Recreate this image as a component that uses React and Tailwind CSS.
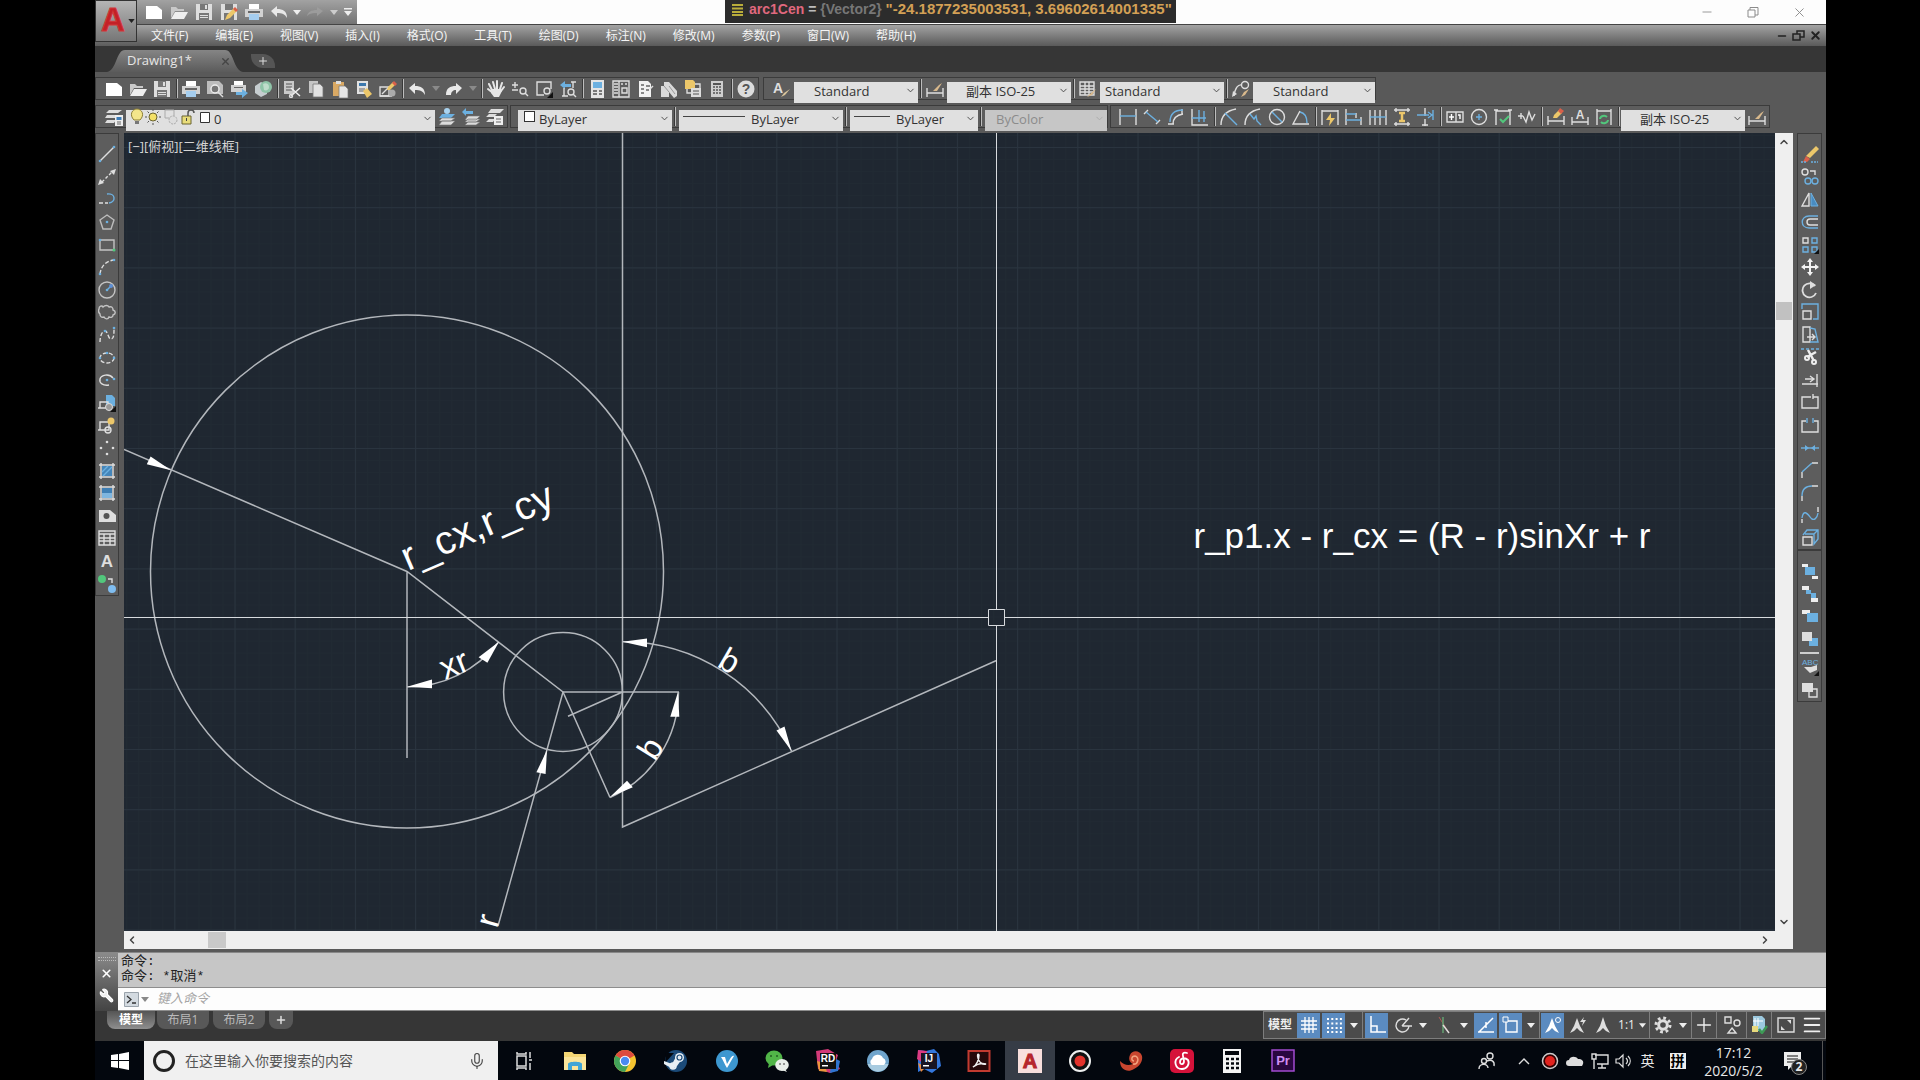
import { Fragment } from 'react';
import { ChevronDown, ChevronUp, ChevronLeft, ChevronRight, Minus, X, Plus, Mic, Wrench, Menu } from 'lucide-react';

const W = '#dedede';
const B = '#6cb0e0';
const Y = '#ecc76a';
const G = '#52c77c';
const R = '#d9604a';

const stroke = { fill: 'none', stroke: W, strokeWidth: 1.4 };
const blue = { fill: 'none', stroke: B, strokeWidth: 1.4 };

// 18x18 glyphs of the toolbars
const icons = {
  new: <path d="M1 3h11l5 4v9H1z" fill="#fff" />,
  open: <><path d="M1 15V4h5l2 2h6v2H5z" fill="#c9c9c9" /><path d="M5 9h13l-4 7H1z" fill="#eee" /></>,
  save: <><path d="M1 1h16v16H1z" fill={W} /><path d="M5 1h8v6H5zM4 10h10v7H4z" fill="#777" /><path d="M10 2h2v4h-2zM5 12h8v1H5zM5 14h8v1H5z" fill={W} /></>,
  saveAs: <><path d="M1 1h16v16H1z" fill={W} /><path d="M5 1h8v6H5zM4 10h10v7H4z" fill="#777" /><path d="M5 17l2-5 7-7 3 3-7 7z" fill={Y} /><path d="M13 6l2-2 3 3-2 2z" fill={R} /></>,
  print: <><path d="M4 1h10v5H4z" fill="#fff" /><path d="M0 6h18v8H0z" fill="#d2d2d2" /><path d="M3 8h12v2H3z" fill="#666" /><path d="M4 11h10v6H4z" fill="#a5cdee" /></>,
  preview: <><path d="M1 1h12l4 4v9H1z" fill="#bdbdbd" /><circle cx="9" cy="9" r="4" fill="#777" stroke="#eee" strokeWidth="1.4" /><path d="M12 12l5 5" {...stroke} /></>,
  publish: <><path d="M4 1h9v4H4z" fill="#fff" /><path d="M1 5h15v7H1z" fill="#d2d2d2" /><path d="M4 7h9v1H4z" fill="#666" /><path d="M6 12h6V9l6 4-6 5v-3H6z" fill={B} /></>,
  globe: <><path d="M1 6l6-4 6 3v9l-6 3-6-4z" fill="#c6cdd0" /><circle cx="12" cy="7" r="6" fill="#8fc4a8" /><path d="M9 4c3-2 6 0 6 3s-3 4-5 3z" fill="#bfdccb" /></>,
  cut: <><path d="M1 1h10v13H1z" fill="#c9c9c9" /><path d="M3 4h6M3 7h6M3 10h6" stroke="#555" /><path d="M8 8l9 8M17 8l-9 8" stroke="#eee" strokeWidth="1.5" /><circle cx="8" cy="16" r="1.5" {...stroke} /></>,
  copy: <><path d="M2 1h9v12H2z" fill="#c5c5c5" /><path d="M6 4h7l3 3v10H6z" fill="#e2e2e2" stroke="#777" strokeWidth=".8" /></>,
  paste: <><path d="M2 2h11v14H2z" fill="#d9a964" /><path d="M5 1h5v3H5z" fill="#ddd" /><path d="M8 6h6l3 3v9H8z" fill="#e6e6e6" stroke="#777" strokeWidth=".7" /></>,
  match: <><path d="M2 1h11v13H2z" fill="#e2e2e2" /><path d="M4 3h7v3H4z" fill="#3c78ad" /><path d="M4 9h6M4 11h6" stroke="#666" /><path d="M8 11l4-3 5 6-5 4z" fill={Y} /></>,
  block: <><path d="M1 7h9v9H1z" {...stroke} /><path d="M1 16h12M10 7L3 14" {...stroke} /><circle cx="13" cy="13" r="3.5" fill="#aaa" /><path d="M8 10l1-3 5-5 3 2-6 6z" fill={Y} /><path d="M13 3l2-2 3 3-2 2z" fill={R} /></>,
  undo: <path d="M1 8l6-5v3c6 0 10 2 10 9-2-4-5-5-10-5v4z" fill="#e8e8e8" />,
  redo: <path d="M17 8l-6-5v3C5 6 1 8 1 15h5c0-3 2-5 5-5v4z" fill="#e8e8e8" />,
  redoDim: <path d="M17 8l-6-4v3C5 7 2 9 1 13c3-3 6-3 10-3v3z" fill="#9c9c9c" />,
  pan: <><path d="M5 10L2 4M8 9L6 2M10 9V1M13 9l2-6M6 13L1 9M14 11l3-4" fill="none" stroke="#e6e6e6" strokeWidth="2" strokeLinecap="round" /><path d="M4 9h10l1 2-3 6H7l-3-4z" fill="#e6e6e6" /></>,
  zoom: <><path d="M1 5h6M4 2v6M1 10h6" {...stroke} /><circle cx="12" cy="11" r="3" {...stroke} /><path d="M14 13l3 3" {...stroke} /></>,
  zoomWin: <><path d="M16 9V2H2v13h7" {...stroke} /><circle cx="12" cy="11" r="3" {...stroke} /><path d="M18 12v6h-6z" fill="#111" /></>,
  zoomPrev: <><path d="M1 5l5-4v3h6v3H6v2z" fill={B} /><path d="M14 2v6M5 8v8h4M3 16h5M12 2h5" {...stroke} /><circle cx="12" cy="12" r="3" {...stroke} /><path d="M14 14l3 3" {...stroke} /></>,
  props: <><path d="M3 0h13v18H3z" fill="#e4e4e4" /><path d="M5 2h9v6H5z" fill={B} /><path d="M5 11h4M5 14h4M11 11h3M11 14h3" stroke="#555" strokeWidth="1.4" /></>,
  center: <><path d="M1 1h16v16H1z" {...stroke} /><path d="M7 1v16M2 4h4M2 7h4M2 10h4M2 13h4M9 4h2M13 4h2M10 8h5v5h-5z" {...stroke} /></>,
  palette: <><path d="M3 1h9l3 3v13H3z" fill="#f1f1f1" /><path d="M5 5h3M5 9h3M5 13h3M10 6h4M10 10h3" stroke="#666" strokeWidth="1.6" /><path d="M14 9l3-3" {...stroke} /></>,
  sheet: <><path d="M1 6h3V2h5l8 9v5l-3 2-5-6v5H1z" fill="#dadada" /><path d="M4 6l5 6M9 6l6 8" stroke="#888" strokeWidth=".8" /></>,
  markup: <><path d="M1 0h8l2 2v7H1z" fill={Y} /><path d="M7 8h10v9H7z" fill="#ddd" /><path d="M9 11h6M9 14h6" stroke="#555" /><path d="M11 4h5v4M3 9v4h4" {...stroke} /></>,
  calc: <><path d="M3 1h12v16H3z" fill="#cfcfcf" /><path d="M5 3h8v2H5z" fill="#555" /><path d="M5 7h8M5 10h8M5 13h8" stroke="#555" strokeWidth="1.6" strokeDasharray="2 1" /></>,
  help: <><circle cx="9" cy="9" r="8.5" fill="#dcdcdc" /><text x="9" y="14" textAnchor="middle" fontSize="14" fontWeight="700" fill="#555" fontFamily="Liberation Sans">?</text></>,
  textStyle: <><text x="0" y="13" fontSize="14" fontWeight="700" fill={W} fontFamily="Liberation Sans">A</text><path d="M8 17l3-4 6-4-5 6z" fill="#d9c59c" /></>,
  dimStyle: <><path d="M1 8v9M17 8v9M1 13h16" {...stroke} /><path d="M7 11l6-6 3-2-5 8z" fill="#d9b98c" /></>,
  tableStyle: <><path d="M1 2h14v13H1zM1 6h14M1 9h14M1 12h14M6 2v13M10 2v13" {...stroke} /><path d="M8 17l4-4 5-4-4 6z" fill="#d9b98c" /></>,
  leader: <><path d="M2 16C3 8 6 4 10 5" {...stroke} /><circle cx="13" cy="5" r="3.5" {...stroke} /><path d="M0 17l1-6 4 3z" fill={W} /><path d="M9 17l3-5 5-3-4 6z" fill="#d9b98c" /></>,
  layers: <><path d="M4 2h13l-4 3H1zM2 7h11l-3 3H0zM2 12h9l-2 3H0z" fill={W} /><path d="M10 7h8v11h-8z" fill="#eee" /><path d="M11.500 9h5v3h-5z" fill="#3d7db8" /><path d="M12 14h4M12 16h4" stroke="#666" /></>,
  layerCur: <><path d="M4 6h13l-4 4H1z" fill={B} /><path d="M4 10h13l-4 3H1zM4 13h13l-4 4H1z" fill="#dcdcdc" stroke="#777" strokeWidth=".6" /><circle cx="9" cy="3" r="3" fill="#a9d3f0" /></>,
  layerPrev: <><path d="M0 4l4-4v3h7v3H4v2z" fill={B} /><path d="M6 8h12l-4 4H3zM6 11h12l-4 3H3zM6 14h12l-4 3H3z" fill="#dcdcdc" stroke="#777" strokeWidth=".6" /></>,
  layerState: <><path d="M5 1h13l-4 4H2zM3 6h8l-3 3H0zM3 11h6l-2 3H0z" fill={W} /><path d="M8 8h9v9H8z" fill="#eee" /><path d="M10 11h5M10 14h5" stroke="#666" /></>,
  dimLin: <><path d="M1 1v16M17 1v16" {...stroke} /><path d="M1 8h16" {...blue} /></>,
  dimAlign: <><path d="M1 6l4-4M13 16l4-4" {...stroke} /><path d="M3 4l12 10" {...blue} /></>,
  dimArc: <><path d="M1 16h6M15 1v6M6 16c0-6 4-9 10-10" {...stroke} /><path d="M3 14C3 6 8 2 16 2" {...blue} /></>,
  dimOrd: <><path d="M1 1v16h16" {...stroke} /><path d="M1 10h14M8 2v12M13 3v11" {...blue} /></>,
  dimRad: <><path d="M1 17C1 9 5 3 16 1" {...stroke} /><path d="M5 5l12 12" {...blue} /></>,
  dimJog: <><path d="M1 17C1 9 5 3 16 1" {...stroke} /><path d="M6 6l4 5 2-3 1 5 4 4" {...blue} /></>,
  dimDia: <><circle cx="9" cy="9" r="7.500" {...stroke} /><path d="M4 4l10 10" {...blue} /></>,
  dimAng: <><path d="M8 3L1 16h16" {...stroke} /><path d="M8 4c5 1 7 6 7 11" {...blue} /></>,
  dimQuick: <><path d="M1 2v15M17 2v15M1 3h16" {...stroke} /><path d="M10 5l-5 7h4l-1 6 6-8h-4z" fill={Y} /></>,
  dimBase: <><path d="M1 1v16M11 5v5M16 9v8" {...stroke} /><path d="M1 6h10M1 12h15" {...blue} /></>,
  dimCont: <><path d="M1 2v15M6 2v15M11 2v15M17 2v15" {...stroke} /><path d="M1 9h16" {...blue} /></>,
  dimSpace: <><path d="M1 2h16M1 16h16M3 0v4M15 0v4M3 14v4M15 14v4" {...stroke} /><path d="M6 5h6M6 13h6M9 5v8" stroke={Y} strokeWidth="2.500" /></>,
  dimBreak: <><path d="M8 0v8M8 11v7M5 17h6" {...stroke} /><path d="M0 7h12M16 2v10M11 4l4 3-4 3" {...blue} /></>,
  tol: <><path d="M1 4h16v10H1zM10 4v10" {...stroke} /><path d="M3 9h5M5.500 6v6M12 7h2v4" stroke="#fff" strokeWidth="1.400" fill="none" /></>,
  cmark: <><circle cx="9" cy="9" r="7.500" {...stroke} /><path d="M6 9h6M9 6v6" {...blue} /></>,
  inspect: <><path d="M2 2v15M16 2v15M2 3h14M0 2h4M14 2h4" {...stroke} /><path d="M6 11l3 3 6-6" fill="none" stroke={G} strokeWidth="2" /></>,
  jogLine: <path d="M0 8h5M3 5v6M5 8l3 6 3-10 3 8 3-6" {...stroke} />,
  dimEdit: <><path d="M1 8v9M17 8v9M1 13h16" {...stroke} /><path d="M6 10l1-3 5-5 3 3-5 5z" fill={Y} /><path d="M11 3l2-3 4 3-3 3z" fill={R} /></>,
  dimText: <><path d="M1 9v8M17 9v8M1 14h16" {...stroke} /><text x="9" y="11" textAnchor="middle" fontSize="12" fontWeight="700" fill={W} fontFamily="Liberation Sans">A</text></>,
  dimUpd: <><path d="M2 1v16M16 1v16M2 3h14" {...stroke} /><path d="M5 11a4 3.500 0 0 1 7-2M13 12a4 3.500 0 0 1-7 2" fill="none" stroke={G} strokeWidth="2" /></>,

  line: <><path d="M2 16L16 2" {...stroke} /><circle cx="2" cy="16" r="1.300" fill={B} /><circle cx="16" cy="2" r="1.300" fill={B} /></>,
  xline: <><path d="M4 14L14 4" {...stroke} strokeDasharray="3 2" /><path d="M0 17l2-6 4 4zM18 1l-6 2 4 4z" fill={W} /></>,
  pline: <><path d="M1 13h9" {...stroke} strokeDasharray="4 2" /><path d="M9 4c9-1 9 8 2 9" {...blue} /></>,
  polygon: <><path d="M9 2l7 5-3 9H5L2 7z" fill="none" stroke="#bcbcbc" strokeWidth="1.400" /><circle cx="9" cy="9" r="1.300" fill={B} /></>,
  rect: <><path d="M2 4h14v10H2z" fill="none" stroke="#c4c4c4" strokeWidth="1.400" /><circle cx="2" cy="4" r="1.300" fill={B} /><circle cx="16" cy="14" r="1.500" fill={G} /></>,
  arc: <><path d="M2 16C3 8 8 3 16 2" {...stroke} strokeDasharray="4 2" /><circle cx="2" cy="16" r="1.300" fill={B} /><circle cx="16" cy="2" r="1.300" fill={B} /></>,
  circle: <><circle cx="9" cy="9" r="8" fill="none" stroke="#c4c4c4" strokeWidth="1.400" /><path d="M9 9l4-4" {...blue} /><circle cx="13" cy="5" r="2" fill="#5d8fd6" /><circle cx="9" cy="9" r="1.300" fill={B} /></>,
  cloud: <path d="M1 6c0-3 3-4 4-2 2-2 5-2 6 0 3-1 4 1 4 3 3 1 3 4 0 5 0 2-2 3-4 2-1 3-4 2-5 0-3 1-4-1-4-3-1-1-2-3-1-5z" fill="none" stroke="#c4c4c4" strokeWidth="1.400" />,
  spline: <><path d="M2 16c0-6 2-11 5-11s3 8 6 8 3-5 3-11" {...stroke} strokeDasharray="4 2" /><circle cx="7" cy="5" r="1.300" fill={B} /><circle cx="16" cy="2" r="1.300" fill={B} /></>,
  ellipse: <><ellipse cx="9" cy="9" rx="7" ry="5" {...stroke} strokeDasharray="4 2" /><circle cx="9" cy="4" r="1.300" fill={B} /><circle cx="2" cy="9" r="1.300" fill={B} /><circle cx="16" cy="9" r="1.300" fill={B} /></>,
  ellArc: <><path d="M11 14C5 15 1 12 2 8s9-6 13-1" {...stroke} /><circle cx="9" cy="9" r="1.300" fill={B} /><circle cx="16" cy="8" r="1.300" fill={B} /></>,
  insert: <><path d="M8 1h6l3 3v8H8z" fill={B} /><path d="M2 8h8v6H2zM0 14h4" {...stroke} /><circle cx="11" cy="13" r="3.500" fill="#999" stroke={W} /><path d="M18 12v6h-6z" fill="#111" /></>,
  mkBlock: <><path d="M2 6h9v8H2zM0 14h5" {...stroke} /><circle cx="10" cy="14" r="3" {...stroke} /><circle cx="13" cy="5" r="3.500" fill={Y} /></>,
  point: <g fill={W}><circle cx="9" cy="3" r="1.300" /><circle cx="3" cy="9" r="1.300" /><circle cx="15" cy="9" r="1.300" /><circle cx="9" cy="15" r="1.300" /></g>,
  hatch: <><path d="M4 4h10v10H4z" fill="#4586ba" /><path d="M1 3h16M1 15h16M3 1v16M15 1v16" {...stroke} /><path d="M4 10l6-6M5 14l9-9" {...blue} /></>,
  gradient: <><path d="M4 4h10v10H4z" fill="#3f7fb4" /><path d="M4 9h10v5H4z" fill="#7fb6df" /><path d="M1 3h16M1 15h16M3 1v16M15 1v16" {...stroke} /></>,
  region: <><path d="M1 3h11l6 5v7H1z" fill={W} /><circle cx="8.500" cy="9" r="3" fill="#555" /></>,
  table: <path d="M1 2h16v14H1zM1 5h16M1 9h16M1 12h16M6 5v11M12 5v11" {...stroke} />,
  mtext: <text x="9" y="15" textAnchor="middle" fontSize="17" fontWeight="700" fill={W} fontFamily="Liberation Sans">A</text>,
  addSel: <><circle cx="4" cy="4" r="4" fill={G} /><circle cx="14" cy="14" r="4" fill="#7fbdf0" /><path d="M10 4h4v4" {...stroke} /></>,

  erase: <><path d="M5 11L15 1l3 3-9 9z" fill={Y} /><path d="M5 11l4 3-3 3H2z" fill={R} /><path d="M0 17h6M10 17h7" {...blue} strokeDasharray="2 1" /></>,
  copyObj: <><circle cx="4" cy="4" r="3" {...stroke} /><path d="M9 3h5v4" {...stroke} /><circle cx="7" cy="13" r="3" {...blue} /><circle cx="14" cy="13" r="3" {...blue} /></>,
  mirror: <><path d="M8 3v13H1z" {...stroke} /><path d="M10 3v13h7z" fill="#4a8cc0" stroke={B} /></>,
  offset: <><path d="M17 3H8C-1 3-1 15 8 15h9" {...blue} /><path d="M17 6H9c-4 0-4 6 0 6h8" {...stroke} /></>,
  array: <><path d="M2 2h5v5H2z" {...stroke} /><path d="M11 2h5v5h-5zM2 11h5v5H2zM11 11h5v5h-5z" {...blue} /><path d="M18 13v5h-5z" fill="#111" /></>,
  move: <path d="M9 0l3 4h-2v4h4V6l4 3-4 3v-2h-4v4h2l-3 4-3-4h2v-4H4v2L0 9l4-3v2h4V4H6z" fill="#f2f2f2" />,
  rotate: <><path d="M14 5a7 7 0 1 0 1 7" {...stroke} strokeWidth="1.800" /><path d="M9 0l6 4-6 4z" fill={W} /></>,
  scale: <><path d="M2 8h8v8H2z" {...stroke} /><path d="M1 6V1h16v15h-5" {...blue} /></>,
  stretch: <><path d="M2 1h7v15H2z" {...stroke} /><path d="M9 2l5 1 3 13H9" {...blue} /><path d="M6 11h7M11 8l3 3-3 3" {...stroke} /></>,
  trim: <><path d="M0 1h18" {...blue} strokeDasharray="3 2" /><path d="M7 2l6 11M15 4L6 9" stroke="#eee" strokeWidth="2.500" /><circle cx="13" cy="14" r="2" fill="none" stroke="#eee" strokeWidth="2" /><circle cx="6" cy="10" r="2" fill="none" stroke="#eee" strokeWidth="2" /></>,
  extend: <><path d="M1 13h16M16 3v13" {...stroke} /><path d="M4 8h8M9 5l4 3-4 3" {...stroke} /></>,
  breakPt: <path d="M12 4h5v11H1V4h9M12 1v5" {...stroke} />,
  breakObj: <><path d="M5 5H1v11h16V5h-4" {...stroke} /><path d="M6 2v5M12 2v5" {...blue} /></>,
  join: <><path d="M0 9h18" {...blue} /><path d="M4 6l4 3-4 3zM14 6l-4 3 4 3z" fill={B} /></>,
  chamfer: <><path d="M1 17v-6M11 2h6" {...stroke} /><path d="M1 11L11 2" {...blue} /></>,
  fillet: <><path d="M1 17v-5M11 2h6" {...stroke} /><path d="M1 12C1 5 5 2 11 2" {...blue} /></>,
  blend: <><path d="M1 17v-4M17 1v5" {...stroke} /><path d="M1 12C3 0 9 12 11 13s5 0 6-6" {...blue} /></>,
  explode: <><path d="M2 8h9v8H2z" {...stroke} /><path d="M2 6l4-5h11v9l-4 5V5H4M13 5l4-4" {...blue} /></>,
  front: <><path d="M1 2h6v3H1zM11 14h6v3h-6z" fill="#eee" /><path d="M4 5h10v8H4z" fill={B} /></>,
  back: <><path d="M1 1h7v4H1zM10 13h7v4h-7z" fill="#eee" /><path d="M5 5h5v3h5v5h-5V9H5z" fill={B} /></>,
  above: <><path d="M1 3h8v4H1z" fill="#eee" /><path d="M6 6h11v9H6z" fill={B} /></>,
  under: <><path d="M8 8h9v8H8z" fill={B} /><path d="M1 2h10v9H1z" fill={W} /></>,
  textFront: <><text x="1" y="7" fontSize="8" fill={B} fontFamily="Liberation Sans">ABC</text><path d="M3 9h7l6-2v5l-7 3z" fill={W} /><path d="M18 13v5h-5z" fill="#111" /></>,
  hatchBack: <><path d="M8 8h8v8H8z" {...stroke} /><path d="M1 2h11v9H1z" fill={W} /></>,
};

function Icon({ name, className = 'size-[18px]' }) {
  return <svg viewBox="0 0 18 18" className={`shrink-0 ${className}`} aria-hidden="true">{icons[name]}</svg>;
}

function ToolButton({ name, className = 'w-6' }) {
  return (
    <button type="button" aria-label={name} className={`flex h-[21px] shrink-0 items-center justify-center ${className}`}>
      <Icon name={name} />
    </button>
  );
}

function Sep() {
  return (
    <div className="flex w-[5px] shrink-0 justify-center self-stretch py-px">
      <div className="w-0.5 border-l border-[#383838] bg-[#bdbdbd]" />
    </div>
  );
}

function Caret({ className = 'w-[13px] text-[#cccccc]' }) {
  return (
    <button type="button" aria-label="more" className={`flex shrink-0 items-center justify-center ${className}`}>
      <svg viewBox="0 0 8 5" className="h-[5px] w-2"><path d="M0 0h8L4 5z" fill="currentColor" /></svg>
    </button>
  );
}

function ToolGroups({ groups }) {
  return groups.map((group, i) => (
    <Fragment key={i}>
      {i > 0 && <Sep />}
      {group.map((name) =>
        name.startsWith('caret') ? <Caret key={name} className="w-[13px] text-[#8a8a8a]" /> : <ToolButton key={name} name={name} />
      )}
    </Fragment>
  ));
}

function Panel({ children, className = '' }) {
  return <div className={`flex h-[23px] shrink-0 items-center border border-[#3b3b3b] bg-[#5d5d5d] ${className}`}>{children}</div>;
}

// Drop-down with the flat AutoCAD look; children are drawn over its left side
function Combo({ label, value, className, pad = 'pl-4', disabled, children }) {
  return (
    <div className={`relative h-[21px] shrink-0 ${className}`}>
      <select
        aria-label={label}
        disabled={disabled}
        className={`h-full w-full appearance-none pb-0.5 text-[13px] leading-[19px] ${pad} ${disabled ? 'bg-[#c6c6c6] text-[#8b8b8b] opacity-100' : 'bg-[#e0e0e0] text-[#333]'}`}
      >
        <option>{value}</option>
      </select>
      <div className="pointer-events-none absolute inset-y-0 left-1 flex items-center gap-0.5">{children}</div>
      <ChevronDown size={11} className={`pointer-events-none absolute top-[7px] right-0.5 ${disabled ? 'text-[#aaa]' : 'text-[#444]'}`} />
    </div>
  );
}

const menus = ['文件(F)', '编辑(E)', '视图(V)', '插入(I)', '格式(O)', '工具(T)', '绘图(D)', '标注(N)', '修改(M)', '参数(P)', '窗口(W)', '帮助(H)'];

function Header() {
  return (
    <header className="flex h-[46px] bg-gradient-to-b from-[#a6a6a6] from-50% to-[#5c5c5c]">
      <button type="button" aria-label="Application menu" className="flex h-[42px] w-[42px] items-center justify-center border border-[#333] bg-gradient-to-b from-[#b5b5b5] to-[#777]">
        <svg viewBox="0 0 30 40" className="h-10 w-[30px]">
          <text x="15" y="30" textAnchor="middle" fontSize="33" fontWeight="700" fill="#c32127" stroke="#d2383b" strokeWidth="1" fontFamily="Liberation Sans">A</text>
        </svg>
        <svg viewBox="0 0 8 5" className="h-1 w-[7px]"><path d="M0 0h8L4 5z" fill="#222" /></svg>
      </button>
      <div className="flex min-w-0 flex-1 flex-col">
        <div className="flex h-[25px] border-b border-[#444] bg-[#fdfdfd]">
          <div className="flex w-[220px] items-center bg-gradient-to-b from-[#a2a2a2] to-[#747474] pl-1">
            {['new', 'open', 'save', 'saveAs', 'print', 'undo'].map((n) => <ToolButton key={n} name={n} className="w-[25px]" />)}
            <Caret className="w-3 text-[#eee]" />
            <ToolButton name="redoDim" />
            <Caret className="w-[13px] text-[#ccc]" />
            <button type="button" aria-label="Customize" className="flex w-4 justify-center">
              <svg viewBox="0 0 8 8" className="size-2"><path d="M0 0h8v1.500H0zM0 3h8L4 8z" fill="#eee" /></svg>
            </button>
          </div>
          <div className="ml-auto flex items-center gap-[33px] pr-[19px] text-[#8b8b8b]">
            <button type="button" aria-label="Minimize"><Minus size={14} strokeWidth={1.5} /></button>
            <button type="button" aria-label="Restore">
              <svg viewBox="0 0 12 12" className="size-3" fill="none" stroke="currentColor"><path d="M1 4h7v7H1zM3 4V1.500h8V9H8" /></svg>
            </button>
            <button type="button" aria-label="Close"><X size={15} strokeWidth={1.5} /></button>
          </div>
        </div>
        <nav className="flex h-[21px] items-center bg-gradient-to-b from-[#a4a4a4] to-[#5a5a5a] pl-[14px]">
          <div className="flex gap-[27px] text-[12px] text-[#f4f4f4]">
            {menus.map((m) => <button key={m} type="button" className="whitespace-nowrap">{m}</button>)}
          </div>
          <div className="ml-auto flex items-center gap-1 pr-1 text-[#222]">
            <button type="button" aria-label="Minimize drawing"><Minus size={12} strokeWidth={3} /></button>
            <button type="button" aria-label="Restore drawing">
              <svg viewBox="0 0 13 11" className="h-[11px] w-[13px]" fill="none" stroke="currentColor" strokeWidth="1.500"><path d="M1 4h7v6H1zM5 4V1h7v6H8" /></svg>
            </button>
            <button type="button" aria-label="Close drawing"><X size={13} strokeWidth={3.5} /></button>
          </div>
        </nav>
      </div>
    </header>
  );
}

function DocTabs() {
  return (
    <div className="flex h-[26px] items-end bg-[#363636] pl-3">
      <div className="relative flex h-[22px] w-36 items-center justify-between pr-4 pl-5">
        <svg viewBox="0 0 144 22" preserveAspectRatio="none" className="absolute inset-0 size-full">
          <defs><linearGradient id="tab" x2="0" y2="1"><stop stopColor="#858585" /><stop offset="1" stopColor="#5b5b5b" /></linearGradient></defs>
          <path d="M0 22C10 20 9 0 18 0h100c9 0 8 20 18 22z" fill="url(#tab)" />
        </svg>
        <span className="relative text-[13px] text-[#e6e6e6]">Drawing1*</span>
        <button type="button" aria-label="Close tab" className="relative mr-1 text-[#454545]"><X size={11} strokeWidth={3} /></button>
      </div>
      <button type="button" aria-label="New tab" className="mb-1 flex h-[14px] w-6 items-center justify-center rounded-tr-xl rounded-bl-xl bg-[#555] text-[#ddd]"><Plus size={12} /></button>
    </div>
  );
}

function Toolbars() {
  return (
    <div className="flex h-[61px] flex-col gap-[5px] overflow-hidden bg-[#595959] pt-[5px]">
      <div className="flex gap-1">
        <Panel className="pl-1.5">
          <ToolGroups
            groups={[
              ['new', 'open', 'save'],
              ['print', 'preview', 'publish', 'globe'],
              ['cut', 'copy', 'paste', 'match', 'block'],
              ['undo', 'caret1', 'redo', 'caret2'],
              ['pan', 'zoom', 'zoomWin', 'zoomPrev'],
              ['props', 'center', 'palette', 'sheet', 'markup', 'calc'],
              ['help'],
            ]}
          />
        </Panel>
        <Panel className="pl-[5px]">
          <ToolButton name="textStyle" className="w-[25px]" />
          <Combo label="Text style" value="Standard" className="w-[124px]" pad="pl-5" />
          <Sep />
          <ToolButton name="dimStyle" />
          <Combo label="Dimension style" value="副本 ISO-25" className="w-[124px]" pad="pl-[19px]" />
          <Sep />
          <ToolButton name="tableStyle" />
          <Combo label="Table style" value="Standard" className="w-[124px]" pad="pl-[5px]" />
          <Sep />
          <ToolButton name="leader" />
          <Combo label="Leader style" value="Standard" className="w-[122px]" pad="pl-5" />
        </Panel>
      </div>
      <div className="flex gap-0.5">
        <Panel className="pl-1.5">
          <ToolButton name="layers" />
          <Combo label="Layer" value="0" className="w-[309px]" pad="pl-[88px]">
            <svg viewBox="0 0 84 18" className="h-[18px] w-[84px]">
              <path d="M4 12c-5-5-2-11 3-11s8 6 3 11z" fill="#f3e58b" stroke="#8c7e35" /><path d="M5 13h4v3H5z" fill="#777" />
              <circle cx="23" cy="9" r="4" fill="#f3e067" stroke="#6b6431" /><path d="M23 1v2M23 15v2M15 9h2M29 9h2M17.500 3.500l1.500 1.500M27 13l1.500 1.500M17.500 14.500L19 13M27 5l1.500-1.500" stroke="#555" />
              <path d="M35 2h9v8h-9z" fill="none" stroke="#aaa" /><circle cx="43" cy="12" r="4" fill="#ddd" stroke="#aaa" strokeDasharray="2 1" />
              <path d="M52 8h9v8h-9z" fill="#e8dc7a" stroke="#6b6431" /><path d="M58 8V5c0-4 6-4 6 0" fill="none" stroke="#555" strokeWidth="1.500" /><path d="M56 10h1v3h-1z" fill="#444" />
              <path d="M70.500 4.500h9v10h-9z" fill="#fff" stroke="#333" />
            </svg>
          </Combo>
          <ToolButton name="layerCur" />
          <ToolButton name="layerPrev" />
          <ToolButton name="layerState" />
        </Panel>
        <Panel className="pl-[7px]">
          <Combo label="Color" value="ByLayer" className="w-[154px]" pad="pl-[21px]">
            <span className="ml-0.5 size-[11px] border border-[#333] bg-white" />
          </Combo>
          <Sep />
          <Combo label="Linetype" value="ByLayer" className="ml-0.5 w-[164px]" pad="pl-[72px]">
            <span className="h-px w-[62px] bg-[#444]" />
          </Combo>
          <Sep />
          <Combo label="Lineweight" value="ByLayer" className="ml-0.5 w-[128px]" pad="pl-[46px]">
            <span className="h-px w-9 bg-[#444]" />
          </Combo>
          <Sep />
          <Combo label="Plot style" value="ByColor" className="ml-0.5 w-[122px]" pad="pl-[11px]" disabled />
        </Panel>
        <Panel className="pl-[5px]">
          <ToolGroups
            groups={[
              ['dimLin', 'dimAlign', 'dimArc', 'dimOrd'],
              ['dimRad', 'dimJog', 'dimDia', 'dimAng'],
              ['dimQuick', 'dimBase', 'dimCont', 'dimSpace', 'dimBreak'],
              ['tol', 'cmark', 'inspect', 'jogLine'],
              ['dimEdit', 'dimText', 'dimUpd'],
            ]}
          />
          <Sep />
          <Combo label="Current dimension style" value="副本 ISO-25" className="w-[124px]" pad="pl-[19px]" />
          <ToolButton name="dimStyle" />
        </Panel>
      </div>
    </div>
  );
}

const drawTools = ['line', 'xline', 'pline', 'polygon', 'rect', 'arc', 'circle', 'cloud', 'spline', 'ellipse', 'ellArc', 'insert', 'mkBlock', 'point', 'hatch', 'gradient', 'region', 'table', 'mtext', 'addSel'];
const modifyTools = ['erase', 'copyObj', 'mirror', 'offset', 'array', 'move', 'rotate', 'scale', 'stretch', 'trim', 'extend', 'breakPt', 'breakObj', 'join', 'chamfer', 'fillet', 'blend', 'explode'];

function ToolColumn({ tools, className }) {
  return (
    <div className={`flex flex-col border border-[#3b3b3b] bg-[#5d5d5d] pt-[9px] ${className}`}>
      {tools.map((name) =>
        name === 'sep' ? (
          <div key={name} className="mx-0.5 my-0.5 h-0.5 shrink-0 bg-[#cfcfcf]" />
        ) : (
          <button key={name} type="button" aria-label={name} className="flex min-h-0 flex-1 items-center justify-center">
            <Icon name={name} />
          </button>
        )
      )}
    </div>
  );
}

function Drawing() {
  return (
    <svg className="size-full bg-[#1f2731]" role="img" aria-label="Drawing1">
      <defs>
        <pattern id="minor" x="50.300" y="14" width="12.040" height="12.040" patternUnits="userSpaceOnUse">
          <path d="M.5 0v12.040M0 .5h12.040" stroke="#212a33" fill="none" />
        </pattern>
        <pattern id="major" x="50.300" y="14" width="60.200" height="60.200" patternUnits="userSpaceOnUse">
          <path d="M.5 0v60.200M0 .5h60.200" stroke="#2a343f" fill="none" />
        </pattern>
      </defs>
      <rect width="100%" height="100%" fill="url(#minor)" />
      <rect width="100%" height="100%" fill="url(#major)" />
      <g transform="translate(-124 -133)">
        <g fill="none" stroke="#b3b7bc" strokeWidth="1.500">
          <circle cx="407" cy="571.500" r="256.500" />
          <circle cx="563" cy="692" r="59.400" />
          <path d="M124 449.500L407 571.500L563 692L498 926M407 571.500V758" />
          <path d="M563 692H679M563 692L610 797.500M622.500 692L568 716.300" />
          <path d="M622.500 133V827L996.500 660.500" />
          <path d="M407 687A115.500 115.500 0 0 0 498.500 642" />
          <path d="M678.500 692A115.500 115.500 0 0 1 610 797.500" />
          <path d="M622.500 641.700A185.300 185.300 0 0 1 791.500 751" />
        </g>
        <g fill="#fff">
          <path d="M171 470.300L150.600 456.500L146.800 464.300z" />
          <path d="M407 686.700L432 679.500V688.300z" />
          <path d="M499 641.700L478.600 657.300L487.400 662.700z" />
          <path d="M678 692L670.300 716.700H679.300z" />
          <path d="M610 797L627 780.700L632.800 787.300z" />
          <path d="M622.500 641.700L647 638.500V647.300z" />
          <path d="M791.500 751L776.500 730.500L784.500 726.500z" />
          <path d="M547 750L536.400 772.300L545.600 774z" />
        </g>
        <g fill="#fff" fontFamily="Liberation Sans, Arial, sans-serif">
          <text transform="translate(408 571) rotate(-23.500)" fontSize="40">r_cx,r_cy</text>
          <text transform="translate(445 680) rotate(-22)" fontSize="34">xr</text>
          <text transform="translate(655 762) rotate(-58)" fontSize="33">b</text>
          <text transform="translate(716 666) rotate(30)" fontSize="33">b</text>
          <text transform="translate(497 929) rotate(-74)" fontSize="34">r</text>
          <text x="1422" y="548" textAnchor="middle" fontSize="35">r_p1.x - r_cx = (R - r)sinXr + r</text>
        </g>
        <path d="M996.500 133V609M996.500 626V2000M124 617.500H988M1005 617.500H4000M988.500 609.500h16v16h-16z" fill="none" stroke="#d8dbde" />
      </g>
    </svg>
  );
}

function Workspace() {
  return (
    <div className="flex min-h-0 flex-1 bg-[#595959]">
      <ToolColumn tools={drawTools} className="mr-[5px] h-[463px] w-6" />
      <div className="mb-[3px] flex min-w-0 flex-1 flex-col">
        <div className="flex min-h-0 flex-1">
          <div className="relative min-w-0 flex-1">
            <Drawing />
            <div className="absolute top-1 left-1 flex text-[13px] leading-[18px] text-[#d5d5d5]">
              <button type="button">[−]</button>
              <button type="button">[俯视]</button>
              <button type="button">[二维线框]</button>
            </div>
          </div>
          <div className="flex w-[18px] flex-col items-center bg-[#efefef] text-[#444]">
            <ChevronUp size={12} strokeWidth={3} className="mt-[3px] shrink-0" />
            <div className="mt-[154px] h-[18px] w-4 shrink-0 bg-[#c1c1c1]" />
            <ChevronDown size={12} strokeWidth={3} className="mt-auto mb-[3px]" />
          </div>
        </div>
        <div className="flex h-[18px] items-center bg-[#efefef] pr-[22px] text-[#444]">
          <ChevronLeft size={12} strokeWidth={3} className="ml-0.5" />
          <div className="ml-[70px] h-4 w-[18px] bg-[#c9c9c9]" />
          <ChevronRight size={12} strokeWidth={3} className="ml-auto" />
        </div>
      </div>
      <div className="mr-1 ml-1 w-[25px]">
        <ToolColumn tools={modifyTools} className="h-[417px]" />
        <ToolColumn tools={['front', 'back', 'above', 'under', 'sep', 'textFront', 'hatchBack']} className="h-[152px]" />
      </div>
    </div>
  );
}

function CommandLine() {
  return (
    <div className="flex h-[59px] border-t border-[#888] bg-[#c6c6c6]">
      <div className="flex w-[23px] flex-col items-center gap-3 bg-gradient-to-b from-[#8a8a8a] to-[#444] pt-1 text-white">
        <div className="h-1 w-[18px] border-y border-dotted border-[#bbb]" />
        <button type="button" aria-label="Close command line" className="-mt-1.5"><X size={13} strokeWidth={3} /></button>
        <button type="button" aria-label="Command settings" className="-mt-1"><Wrench size={15} fill="#eee" className="-scale-x-100" /></button>
      </div>
      <div className="flex flex-1 flex-col">
        <div className="flex-1 pt-px pl-[3px] font-['Liberation_Mono','Noto_Sans_CJK_SC',monospace] text-[13px] leading-[15px] text-[#222]">
          <p>命令:</p>
          <p>命令: *取消*</p>
        </div>
        <label className="flex h-6 items-center border-y border-[#8d8d8d] bg-[#fdfdfd] pl-1.5 text-[#888]">
          <svg viewBox="0 0 15 15" className="size-[15px]"><path d="M.5.5h14v14H.5z" fill="#d3dae0" stroke="#9aa3ab" /><path d="M3 4l4 3.500L3 11M8 11h4" fill="none" stroke="#333" strokeWidth="1.300" /></svg>
          <Caret className="w-3 text-[#888]" />
          <input type="text" aria-label="Command" placeholder="键入命令" className="ml-1.5 flex-1 text-[13px] italic outline-none placeholder:text-[#a5a5a5]" />
        </label>
      </div>
    </div>
  );
}

const statusIcons = {
  grid: <path d="M5 1v16M9 1v16M13 1v16M1 5h16M1 9h16M1 13h16" stroke="#fff" strokeWidth="1.300" />,
  snap: <path d="M2 3h15M2 7.500h15M2 12h15M2 16h15" stroke="#fff" strokeWidth="2" strokeDasharray="2 2.300" />,
  ortho: <path d="M3 0v16h15M3 10h6v6" fill="none" stroke="#fff" strokeWidth="1.500" />,
  polar: <path d="M12 4a6.500 6.500 0 1 0 3 6M8 10l7-8M8 10h10" {...stroke} />,
  iso: <><path d="M5 1l10 16" stroke="#b05a55" /><path d="M9 1v16" stroke="#63a070" strokeWidth="1.500" /><path d="M9 9l6 8" {...stroke} /></>,
  track: <path d="M1 16h16M2 16L16 2M9 6v6" fill="none" stroke="#fff" strokeWidth="1.500" />,
  osnap: <><path d="M4 5h11v11H4z" fill="none" stroke="#fff" strokeWidth="1.400" /><path d="M1 1h5v5H1z" fill="#5b8bc0" stroke="#fff" /></>,
  annoVis: <><path d="M8 2l3 8 4 7-4-2-3-3-3 3-4 2 4-7z" fill="#fff" /><circle cx="14" cy="4" r="2.500" fill="none" stroke="#fff" /></>,
  annoAdd: <><path d="M8 2l3 8 4 7-4-2-3-3-3 3-4 2 4-7z" fill={W} /><path d="M15 1l-4 5h3l-1 4 4-6h-3z" fill={W} /></>,
  anno: <path d="M9 1l3 9 4 7-4-2-3-3-3 3-4 2 4-7z" fill={W} />,
  gear: <><circle cx="9" cy="9" r="4.300" fill="none" stroke={W} strokeWidth="3" /><circle cx="9" cy="9" r="7" fill="none" stroke={W} strokeWidth="3" strokeDasharray="2.750 2.750" /></>,
  iso2: <><path d="M2 1h6v6H2z" {...stroke} /><circle cx="14" cy="7" r="3" {...stroke} /><path d="M9 12l4 5H5z" {...stroke} /></>,
  hw: <><path d="M3 0h9l3 3v12H3z" fill="#9cc9df" /><path d="M2 10h6v6H2z" fill="#e8d97c" /><path d="M5 2v8M8 2v8M3 5h10" stroke="#fff" /><path d="M9 13l3 4 5-7" fill="none" stroke="#3d9a55" strokeWidth="2.500" /></>,
  clean: <><path d="M1 2h16v14H1z" {...stroke} /><path d="M10 4h4v4zM4 10v4h4z" fill={W} /></>,
};

function StatusButton({ name, on, className = 'w-[25px]' }) {
  return (
    <button type="button" aria-label={name} aria-pressed={on} className={`flex h-[26px] items-center justify-center ${className}`}>
      <span className={`flex h-[25px] w-[23px] items-center justify-center ${on ? 'bg-[#5b8bc0]' : ''}`}>
        <svg viewBox="0 0 18 18" className="size-[18px]">{statusIcons[name]}</svg>
      </span>
    </button>
  );
}

function StatusBar() {
  const line = <div className="h-full w-px bg-[#7d7d7d]" />;
  return (
    <div className="flex h-[30px] items-start bg-[#363636] pl-3">
      <div className="flex h-[18px] text-[12px] leading-[18px]">
        <button type="button" className="w-12 rounded-b-lg bg-gradient-to-b from-[#555] to-[#8f8f8f] font-bold text-white">模型</button>
        <button type="button" className="ml-0.5 w-[52px] rounded-b-lg bg-[#585858] text-[#bbb]">布局1</button>
        <button type="button" className="ml-1 w-[52px] rounded-b-lg bg-[#585858] text-[#bbb]">布局2</button>
        <button type="button" aria-label="New layout" className="ml-1 flex w-6 items-center justify-center rounded-b-lg bg-[#585858] text-[#ddd]"><Plus size={12} strokeWidth={3} /></button>
      </div>
      <div className="ml-auto flex h-7 items-center border border-[#7d7d7d] bg-[#4b4b4b] text-[#eee]">
        <button type="button" className="w-8 text-[12px] font-bold">模型</button>
        <StatusButton name="grid" on />
        <StatusButton name="snap" on />
        <Caret className="w-4 text-[#eee]" />
        {line}
        <StatusButton name="ortho" on className="w-[27px]" />
        <StatusButton name="polar" />
        <Caret className="w-4 text-[#eee]" />
        <StatusButton name="iso" className="w-[23px]" />
        <Caret className="w-[19px] text-[#eee]" />
        <StatusButton name="track" on />
        <StatusButton name="osnap" on />
        <Caret className="w-4 text-[#eee]" />
        {line}
        <StatusButton name="annoVis" on className="w-[25px]" />
        <StatusButton name="annoAdd" />
        <StatusButton name="anno" />
        <button type="button" className="flex w-[34px] items-center justify-center gap-1 text-[12px]">
          1:1 <svg viewBox="0 0 8 5" className="h-[5px] w-[7px]"><path d="M0 0h8L4 5z" fill="currentColor" /></svg>
        </button>
        {line}
        <StatusButton name="gear" />
        <Caret className="w-4 text-[#eee]" />
        {line}
        <button type="button" aria-label="Monitor" className="flex w-6 justify-center"><Plus size={22} strokeWidth={1.5} /></button>
        {line}
        <StatusButton name="iso2" className="w-[29px]" />
        {line}
        <StatusButton name="hw" className="w-6" />
        {line}
        <StatusButton name="clean" className="w-[27px]" />
        <button type="button" aria-label="Customization" className="flex w-[26px] justify-center"><Menu size={22} strokeWidth={2} /></button>
      </div>
    </div>
  );
}

// 24x24 artwork of the pinned programs
const apps = [
  ['Task view', <path d="M5 7h9v10H5zM5 3v2h9V3M5 21v-2h9v2M18 3v6M18 14v7M17 11h3" fill="none" stroke="#ddd" strokeWidth="1.500" />],
  ['Explorer', <><path d="M1 3h8l2 2h12v16H1z" fill="#f4d674" /><path d="M1 8h22v13H1z" fill="#fbe59a" /><path d="M5 21v-6c0-3 14-3 14 0v6h-4v-4H9v4z" fill="#40a5d6" /></>],
  ['Chrome', <><circle cx="12" cy="12" r="11" fill="#f5c430" /><path d="M12 12L2.500 6.500A11 11 0 0 1 21.500 6.500z" fill="#dd4b3e" /><path d="M12 12L2.500 6.500A11 11 0 0 0 12 23l4-8z" fill="#42a35a" /><circle cx="12" cy="12" r="5.300" fill="#fff" /><circle cx="12" cy="12" r="4.200" fill="#4a8af0" /></>],
  ['Steam', <><circle cx="12" cy="12" r="11" fill="#1b4a78" /><path d="M2 4h8L1 14z" fill="#03070e" /><path d="M0 12l8 3 5-9 5 4-5 7-4 3-9-5z" fill="#e7eef4" /><circle cx="15.500" cy="8.500" r="4.500" fill="#e7eef4" /><circle cx="15.500" cy="8.500" r="2.500" fill="none" stroke="#1b4a78" strokeWidth="1.200" /><circle cx="9" cy="17" r="3" fill="none" stroke="#e7eef4" strokeWidth="1.500" /></>],
  ['V', <><circle cx="12" cy="12" r="11" fill="#3d97d0" /><path d="M6 8h4l2 7 3-5c1-2 3-4 4-3-2 3-5 9-7 12-2-3-4-8-6-11z" fill="#fff" /></>],
  ['WeChat', <><ellipse cx="9" cy="9" rx="8.500" ry="7.500" fill="#51b548" /><path d="M4 14l-1 5 5-3z" fill="#51b548" /><ellipse cx="17" cy="16" rx="6.800" ry="6" fill="#e9eee9" /><path d="M20 20l2 3-5-2z" fill="#e9eee9" /><circle cx="6" cy="7" r="1" fill="#245c22" /><circle cx="12" cy="7" r="1" fill="#245c22" /><circle cx="15" cy="15" r="1" fill="#777" /><circle cx="19" cy="15" r="1" fill="#777" /></>],
  ['Rider', <><path d="M0 2l12-2 10 6-2 6 4 8-10 4L2 20z" fill="#d23a78" /><path d="M16 8l8 4-2 10-8 2z" fill="#2f74d0" /><path d="M1 12l2 10 8 1-3-9z" fill="#e9963c" /><path d="M4 4h16v16H4z" fill="#111" /><text x="12" y="13" textAnchor="middle" fontSize="10" fontWeight="700" fill="#fff" fontFamily="Liberation Sans">RD</text><path d="M6 16h6v1.500H6z" fill="#fff" /></>],
  ['Cloud', <><circle cx="12" cy="12" r="11" fill="#6fa4cc" /><path d="M1.500 15h21A11 11 0 0 1 1.500 15z" fill="#a8cbe0" /><path d="M6 16a3.500 3.500 0 0 1 0-6 6 6 0 0 1 11-1 4 4 0 0 1 1 7z" fill="#fff" /></>],
  ['IntelliJ', <><path d="M1 1l8 1 8-2 5 5 2 12-9 7-8-4-6 3z" fill="#3477dd" /><path d="M1 1l9 1-4 12-6-4z" fill="#dc3a83" /><path d="M1 14l8 4-5 5z" fill="#eb8b3f" /><path d="M4 4h16v16H4z" fill="#191423" /><text x="12" y="13" textAnchor="middle" fontSize="10" fontWeight="700" fill="#fff" fontFamily="Liberation Sans">IJ</text><path d="M6 16h6v1.500H6z" fill="#fff" /></>],
  ['Acrobat', <><path d="M1.500 2h21v20h-21z" fill="#26090a" stroke="#c23b30" strokeWidth="2" /><path d="M6 18c4-2 6-8 6-12-1-2-2 0-1 3 1 4 4 7 8 6-4-1-9 0-13 3z" fill="none" stroke="#eee" strokeWidth="1.500" /></>],
  ['AutoCAD', <><path d="M0 0h24v24H0z" fill="#f8dfdd" /><text x="12" y="19" textAnchor="middle" fontSize="20" fontWeight="700" fill="#b5262c" stroke="#b5262c" fontFamily="Liberation Sans">A</text></>],
  ['Recorder', <><circle cx="12" cy="12" r="10" fill="#111" stroke="#eee" strokeWidth="2" /><circle cx="12" cy="12" r="5.500" fill="#e3322b" /></>],
  ['Navicat', <><path d="M1 12c0 9 8 12 14 8 6-3 9-8 8-13-2-6-10-6-12-1-2 4 0 8 3 9-5 2-9 1-13-3z" fill="#c9462f" /><path d="M14 15c5 1 7-7 2-8-4 0-4 5-1 5" fill="none" stroke="#f3a07c" strokeWidth="1.500" /></>],
  ['NetEase Music', <><rect width="24" height="24" rx="5" fill="#d5123a" /><path d="M17 4c-3-1-5 0-4 3l1 5c0 4-4 4-4 1 0-4 5-5 8-2 2 4-1 9-6 9-7 0-9-9-3-12" fill="none" stroke="#fff" strokeWidth="1.800" strokeLinecap="round" /></>],
  ['Calculator', <><path d="M3 0h18v24H3z" fill="#f4f4f4" /><path d="M5 2h14v4H5z" fill="#05080e" /><path d="M6 10h13M6 14.500h13M6 19h13" stroke="#05080e" strokeWidth="2.500" strokeDasharray="3 2" /></>],
  ['Premiere', <><path d="M1 1h22v21H1z" fill="#2a0740" stroke="#a34bd0" strokeWidth="1.500" /><text x="12" y="16" textAnchor="middle" fontSize="13" fontWeight="700" fill="#cf8df2" fontFamily="Liberation Sans">Pr</text></>],
];

function Tray({ label, className, children }) {
  return (
    <button type="button" aria-label={label} className={`flex items-center justify-center ${className}`}>
      <svg viewBox="0 0 18 18" className="size-[18px]">{children}</svg>
    </button>
  );
}

function Taskbar() {
  return (
    <footer className="flex h-[39px] bg-[#03070e] text-[#e8e8e8]">
      <button type="button" aria-label="Start" className="flex w-[49px] items-center justify-center">
        <svg viewBox="0 0 18 18" className="size-[18px]"><path d="M0 3l7-1v6H0zM8 2l10-2v8H8zM0 9h7v7l-7-1zM8 9h10v9L8 16z" fill="#fff" /></svg>
      </button>
      <label className="flex w-[354px] items-center bg-[#f0f0f0] pr-3 pl-[9px] text-[#444]">
        <span className="size-[22px] rounded-full border-[3px] border-[#222]" />
        <input type="text" aria-label="Search" placeholder="在这里输入你要搜索的内容" className="ml-[10px] min-w-0 flex-1 text-[14px] outline-none placeholder:text-[#555]" />
        <Mic size={18} strokeWidth={1.500} />
      </label>
      <div className="flex w-[810px] pl-px">
        {apps.map(([name, art]) => (
          <button key={name} type="button" aria-label={name} className={`flex flex-1 items-center justify-center ${name === 'AutoCAD' ? 'bg-[#363c46]' : ''}`}>
            <svg viewBox="0 0 24 24" className="size-6">{art}</svg>
          </button>
        ))}
      </div>
      <div className="ml-auto flex pr-[3px]">
        <Tray label="People" className="w-[46px]"><circle cx="6" cy="9" r="2.500" {...stroke} /><circle cx="12" cy="4" r="3" {...stroke} /><path d="M1 17c0-6 9-6 9-1M9 9c4-2 8 0 7 5" {...stroke} /></Tray>
        <Tray label="Hidden icons" className="w-[27px]"><path d="M4 12l5-5 5 5" {...stroke} /></Tray>
        <Tray label="Recording" className="w-[25px]"><circle cx="9" cy="9" r="7.500" fill="#300" stroke="#ccc" strokeWidth="1.500" /><circle cx="9" cy="9" r="5" fill="#e2231e" /></Tray>
        <Tray label="OneDrive" className="w-[25px]"><path d="M3 14a3 3 0 0 1 0-6c1-4 7-4 9-1 4 0 6 2 5 5l-1 2z" fill="#ddd" /></Tray>
        <Tray label="Network" className="w-[25px]"><path d="M4 3h13v9H6M1 2h4v5H1zM3 7v10M11 12v4M7 16h8" {...stroke} /></Tray>
        <Tray label="Volume" className="w-[23px]"><path d="M1 7h3l4-4v12l-4-4H1zM11 6c2 2 2 4 0 6M13 4c3 3 3 7 0 10" {...stroke} strokeWidth="1.200" /></Tray>
        <button type="button" className="w-[25px] text-[14px]">英</button>
        <button type="button" aria-label="拼" className="flex w-[35px] items-center justify-center">
          <span className="flex size-4 items-center justify-center bg-[#eee] text-[14px] font-bold text-black">拼</span>
        </button>
        <button type="button" className="w-[77px] pt-0.5 text-center text-[14px] leading-[18px] whitespace-nowrap">
          <span className="block">17:12</span>
          <span className="block">2020/5/2</span>
        </button>
        <button type="button" aria-label="Notifications" className="relative w-[50px]">
          <svg viewBox="0 0 18 18" className="ml-[12px] size-[18px]"><path d="M0 0h17v14H8l-4 4v-4H0z" fill="#eee" /><path d="M3 4h11M3 7h11M3 10h8" stroke="#111" strokeWidth="1.200" /></svg>
          <span className="absolute top-[18px] left-[19px] flex size-4 items-center justify-center rounded-full border border-[#888] bg-[#222] text-[12px] font-bold">2</span>
        </button>
        <div className="border-l border-[#555]" />
      </div>
    </footer>
  );
}

export default function App() {
  return (
    <div className="min-h-screen bg-black pr-[94px] pl-[95px] font-['Open_Sans','Noto_Sans_CJK_SC',sans-serif]">
      <div className="relative flex h-screen flex-col overflow-hidden">
        <Header />
        <DocTabs />
        <Toolbars />
        <Workspace />
        <CommandLine />
        <StatusBar />
        <Taskbar />
        <div className="absolute top-0 left-[630px] flex h-[23px] items-center bg-[#2c2c2c] pr-1 pl-[7px] pb-1 font-['Liberation_Sans',Arial,sans-serif] text-[14px] font-bold whitespace-pre">
          <svg viewBox="0 0 11 12" className="mr-1.5 h-3 w-[11px]"><path d="M0 1h11M0 4.500h11M0 8h11M0 11h11" stroke="#b9ad3b" strokeWidth="2" /></svg>
          <span className="text-[#e0687e]">arc1Cen</span>
          <span className="text-[#bbb]"> = </span>
          <span className="text-[#777]">{'{Vector2} '}</span>
          <span className="text-[15px] text-[#d3a055]">"-24.1877235003531, 3.69602614001335"</span>
        </div>
      </div>
    </div>
  );
}
